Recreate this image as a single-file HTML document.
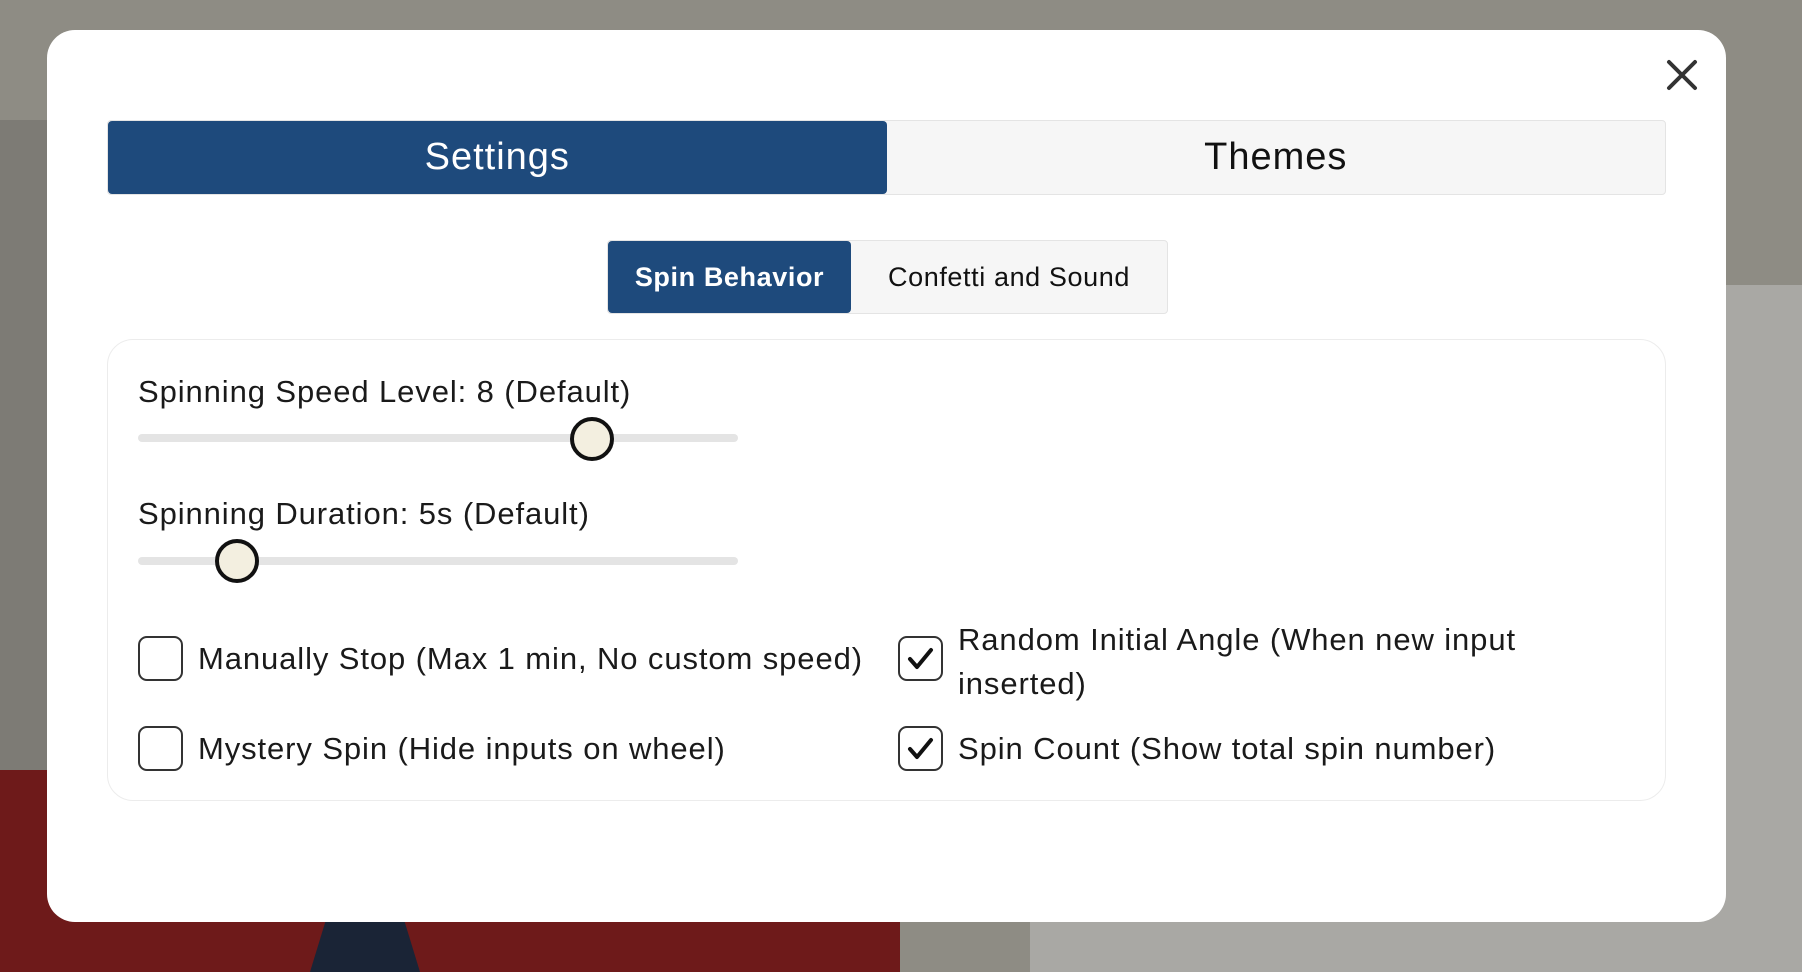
<!DOCTYPE html>
<html><head><meta charset="utf-8"><style>
*{box-sizing:border-box;margin:0;padding:0}
body{width:1802px;height:972px;overflow:hidden;background:#8e8c84;font-family:"Liberation Sans",sans-serif;position:relative}
.bg1{position:absolute;left:1030px;top:285px;width:772px;height:687px;background:#a9a8a4}
.bg2{position:absolute;left:0;top:770px;width:900px;height:202px;background:#6e1a1a}
.bg3{position:absolute;left:310px;top:900px;width:110px;height:72px;background:#1a2436;clip-path:polygon(20% 0,80% 0,100% 100%,0 100%)}
.bg4{position:absolute;left:0;top:120px;width:47px;height:650px;background:#7d7b75}
.modal{position:absolute;left:47px;top:30px;width:1679px;height:892px;background:#fff;border-radius:28px}
.close{position:absolute;left:1665px;top:58px}
.tabs{position:absolute;left:107px;top:120px;width:1559px;height:75px;display:flex;border:1px solid #e4e4e4;border-radius:4px;background:#f6f6f6}
.tab{flex:1;display:flex;align-items:center;justify-content:center;font-size:38px;color:#111;letter-spacing:1px}
.tab.on{background:#1e4a7c;color:#fff;border-radius:4px}
.sub{position:absolute;left:607px;top:240px;height:74px;display:flex;border:1px solid #e4e4e4;border-radius:4px;background:#f6f6f6}
.sub div{display:flex;align-items:center;justify-content:center;font-size:27px;color:#111;letter-spacing:0.6px}
.sub .on{width:243px;background:#1e4a7c;color:#fff;font-weight:bold;border-radius:4px}
.sub .off{width:316px}
.card{position:absolute;left:107px;top:339px;width:1559px;height:462px;border:1px solid #ececec;border-radius:26px}
.lbl{position:absolute;font-size:31px;color:#1a1a1a;white-space:nowrap;letter-spacing:0.9px}
.track{position:absolute;left:138px;width:600px;height:8px;background:#e4e4e4;border-radius:4px}
.thumb{position:absolute;width:44px;height:44px;border-radius:50%;background:#f3efe0;border:4px solid #111}
.cb{position:absolute;width:45px;height:45px;border:2px solid #333;border-radius:9px;background:#fff}
</style></head><body>
<div class="bg4"></div><div class="bg1"></div><div class="bg2"></div><div class="bg3"></div>
<div class="modal"></div>
<svg class="close" width="34" height="34" viewBox="0 0 34 34"><path d="M4 4L30 30M30 4L4 30" stroke="#333" stroke-width="4" stroke-linecap="round"/></svg>
<div class="tabs"><div class="tab on">Settings</div><div class="tab">Themes</div></div>
<div class="sub"><div class="on">Spin Behavior</div><div class="off">Confetti and Sound</div></div>
<div class="card"></div>
<div class="lbl" style="left:138px;top:374px">Spinning Speed Level: 8 (Default)</div>
<div class="track" style="top:434px"></div>
<div class="thumb" style="left:570px;top:417px"></div>
<div class="lbl" style="left:138px;top:496px">Spinning Duration: 5s (Default)</div>
<div class="track" style="top:557px"></div>
<div class="thumb" style="left:215px;top:539px"></div>
<div class="cb" style="left:138px;top:636px"></div>
<div class="lbl" style="left:198px;top:641px">Manually Stop (Max 1 min, No custom speed)</div>
<div class="cb" style="left:138px;top:726px"></div>
<div class="lbl" style="left:198px;top:731px">Mystery Spin (Hide inputs on wheel)</div>
<div class="cb" style="left:898px;top:636px"><svg width="41" height="41" viewBox="0 0 41 41"><path d="M10 21L17 29L31 12" stroke="#111" stroke-width="4" fill="none" stroke-linecap="round" stroke-linejoin="round"/></svg></div>
<div class="lbl" style="left:958px;top:618px;line-height:44px">Random Initial Angle (When new input<br>inserted)</div>
<div class="cb" style="left:898px;top:726px"><svg width="41" height="41" viewBox="0 0 41 41"><path d="M10 21L17 29L31 12" stroke="#111" stroke-width="4" fill="none" stroke-linecap="round" stroke-linejoin="round"/></svg></div>
<div class="lbl" style="left:958px;top:731px">Spin Count (Show total spin number)</div>
</body></html>
